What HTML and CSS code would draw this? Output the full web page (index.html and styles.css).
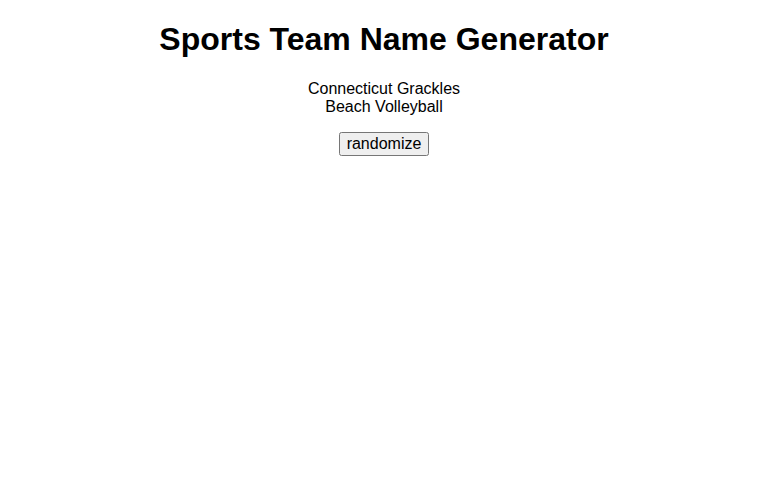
FILE: index.html
```html
<!DOCTYPE html>
<html>
<head>
<meta charset="utf-8">
<title>Sports Team Name Generator</title>
<link rel="stylesheet" href="styles.css">
</head>
<body>
<div class="app">
  <h1 class="title">Sports Team Name Generator</h1>
  <div class="team">
    <div class="team-name">Connecticut Grackles</div>
    <div class="team-sport">Beach Volleyball</div>
  </div>
  <p class="actions"><button class="randomize" type="button">randomize</button></p>
</div>
</body>
</html>
```

FILE: styles.css
```css
body {
  margin: 0;
  background: #fff;
  color: #000;
  font-family: "Liberation Sans", Arial, sans-serif;
  font-size: 16px;
}

.app {
  text-align: center;
}

.title {
  font-size: 32px;
  font-weight: bold;
  margin: 21.44px 0;
}

.actions {
  margin: 16px 0;
}

.randomize {
  font-family: "Liberation Sans", Arial, sans-serif;
  font-size: 16px;
}
```
